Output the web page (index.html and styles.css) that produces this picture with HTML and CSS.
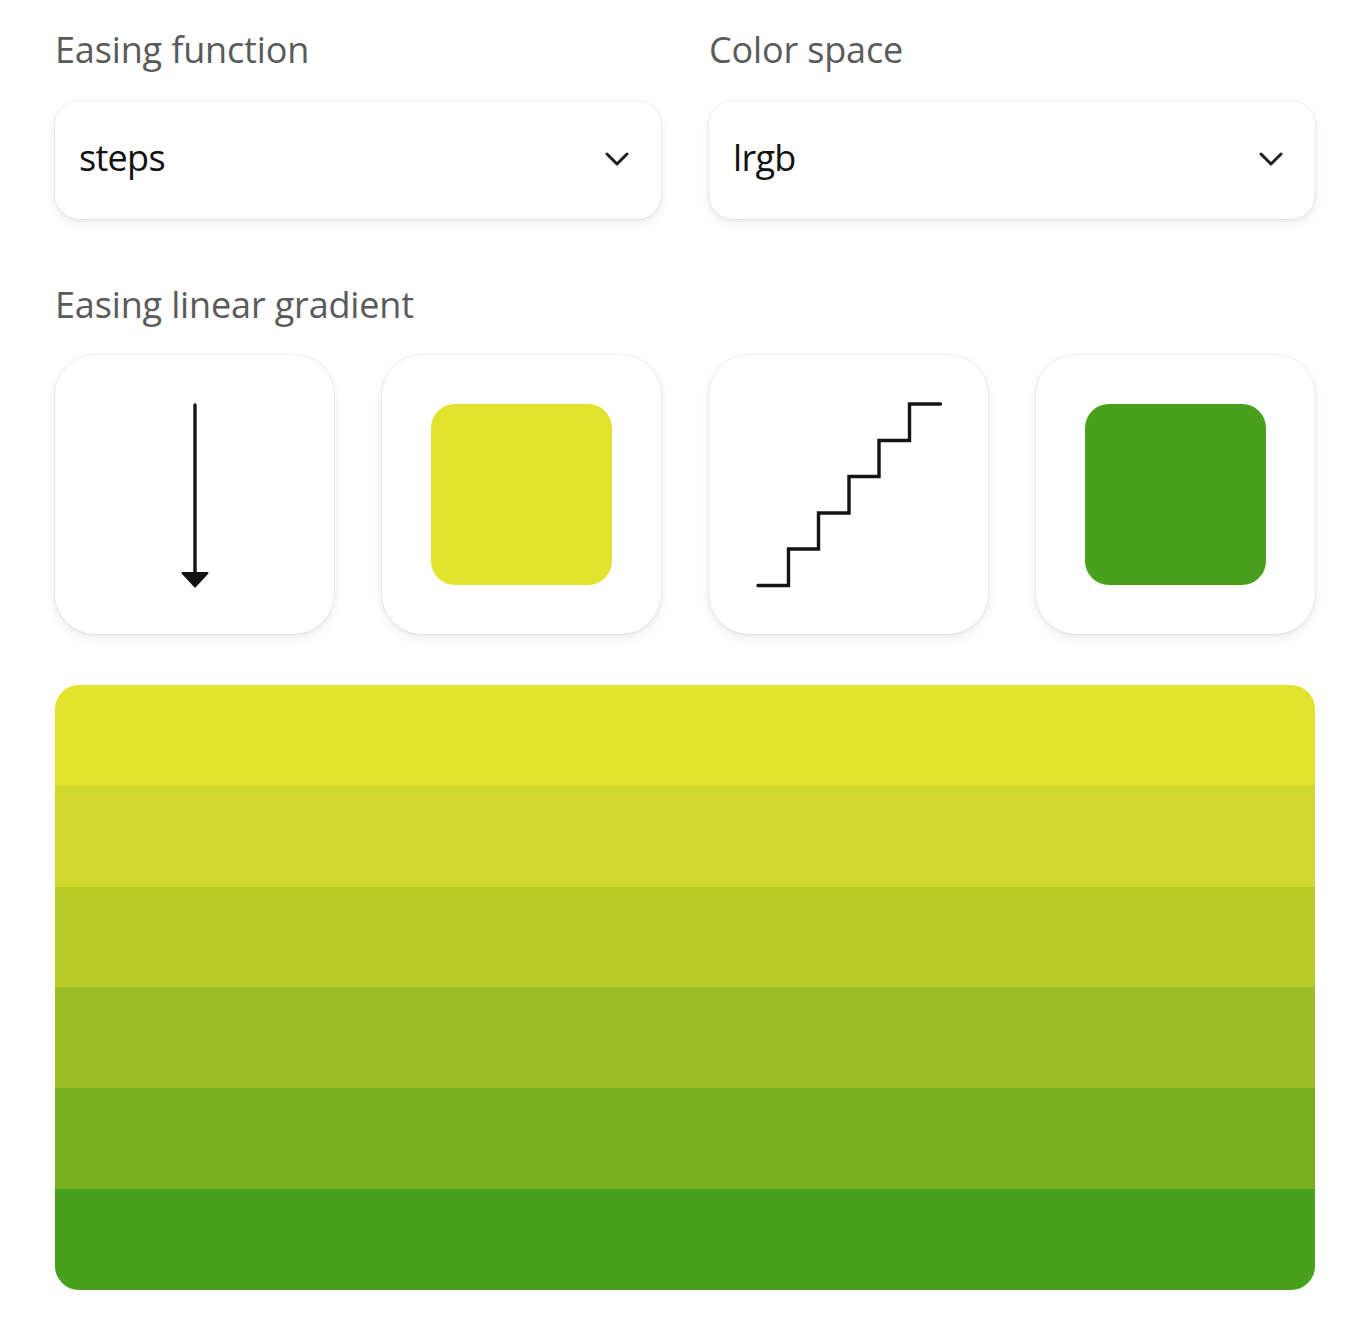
FILE: index.html
```html
<!DOCTYPE html>
<html lang="en">
<head>
<meta charset="utf-8">
<title>Easing gradient</title>
<link rel="stylesheet" href="styles.css">
</head>
<body>
<main class="page">
  <section class="fields">
    <div class="field">
      <div class="label">Easing function</div>
      <div class="select">
        <span class="select-value">steps</span>
        <svg class="chevron" viewBox="0 0 24 14" width="24" height="14"><polyline points="2,2 12,12 22,2" fill="none" stroke="#1e1e1e" stroke-width="3" stroke-linecap="round" stroke-linejoin="round"/></svg>
      </div>
    </div>
    <div class="field">
      <div class="label">Color space</div>
      <div class="select">
        <span class="select-value">lrgb</span>
        <svg class="chevron" viewBox="0 0 24 14" width="24" height="14"><polyline points="2,2 12,12 22,2" fill="none" stroke="#1e1e1e" stroke-width="3" stroke-linecap="round" stroke-linejoin="round"/></svg>
      </div>
    </div>
  </section>

  <div class="label label-section">Easing linear gradient</div>

  <section class="cards">
    <div class="card">
      <svg class="icon" viewBox="0 0 182 182" width="182" height="182">
        <line x1="91" y1="1" x2="91" y2="172" stroke="#141414" stroke-width="3.4" stroke-linecap="round"/>
        <polygon points="78.5,169 103.5,169 91,182.5" fill="#141414" stroke="#141414" stroke-width="2" stroke-linejoin="round"/>
      </svg>
    </div>
    <div class="card">
      <div class="swatch swatch-start"></div>
    </div>
    <div class="card">
      <svg class="icon" viewBox="0 0 182 182" width="182" height="182">
        <path d="M0 181.5 H30.5 V145 H60.5 V109 H91 V72.5 H121 V36.5 H151.5 V0 H182.5" fill="none" stroke="#141414" stroke-width="3.4" stroke-linecap="round" stroke-linejoin="miter"/>
      </svg>
    </div>
    <div class="card">
      <div class="swatch swatch-end"></div>
    </div>
  </section>

  <section class="gradient">
    <div class="band" style="background:#e2e32f"></div>
    <div class="band" style="background:#d1d82d"></div>
    <div class="band" style="background:#b7cc29"></div>
    <div class="band" style="background:#9bbd25"></div>
    <div class="band" style="background:#7aaf20"></div>
    <div class="band" style="background:#47a11d"></div>
  </section>
</main>
</body>
</html>
```

FILE: styles.css
```css
* { box-sizing: border-box; }

html, body {
  margin: 0;
  padding: 0;
  background: #ffffff;
}

body {
  font-family: "Open Sans", "Noto Sans", sans-serif;
}

.page {
  width: 1260px;
  margin-left: 55px;
  padding-top: 26px;
  padding-bottom: 30px;
}

.fields {
  display: grid;
  grid-template-columns: 1fr 1fr;
  column-gap: 48px;
}

.label {
  font-size: 36px;
  line-height: 48px;
  color: #5a5a5a;
  letter-spacing: -0.15px;
}

.field .label {
  margin-bottom: 27px;
}

.select {
  height: 118px;
  border-radius: 24px;
  background: #fff;
  box-shadow: 0 0 0 1px rgba(0, 0, 0, 0.045), 0 2px 6px rgba(0, 0, 0, 0.07), 0 6px 18px rgba(0, 0, 0, 0.04);
  display: flex;
  align-items: center;
  justify-content: space-between;
  padding: 0 32px 4px 24px;
}

.select-value {
  font-size: 36px;
  line-height: 48px;
  color: #111;
  letter-spacing: -0.7px;
}

.chevron {
  display: block;
  margin-top: 2px;
}

.label-section {
  margin-top: 62px;
  margin-bottom: 26px;
}

.cards {
  display: grid;
  grid-template-columns: repeat(4, 1fr);
  column-gap: 48px;
}

.card {
  aspect-ratio: 1 / 1;
  border-radius: 40px;
  background: #fff;
  box-shadow: 0 0 0 1px rgba(0, 0, 0, 0.045), 0 2px 6px rgba(0, 0, 0, 0.07), 0 6px 18px rgba(0, 0, 0, 0.04);
  display: flex;
  align-items: center;
  justify-content: center;
}

.icon {
  display: block;
  overflow: visible;
}

.swatch {
  width: 181px;
  height: 181px;
  border-radius: 24px;
}

.swatch-start { background: #e2e32f; }
.swatch-end { background: #47a11d; }

.gradient {
  margin-top: 51px;
  height: 605px;
  border-radius: 24px;
  overflow: hidden;
  display: flex;
  flex-direction: column;
}

.band {
  flex: 1 1 0;
}
```
